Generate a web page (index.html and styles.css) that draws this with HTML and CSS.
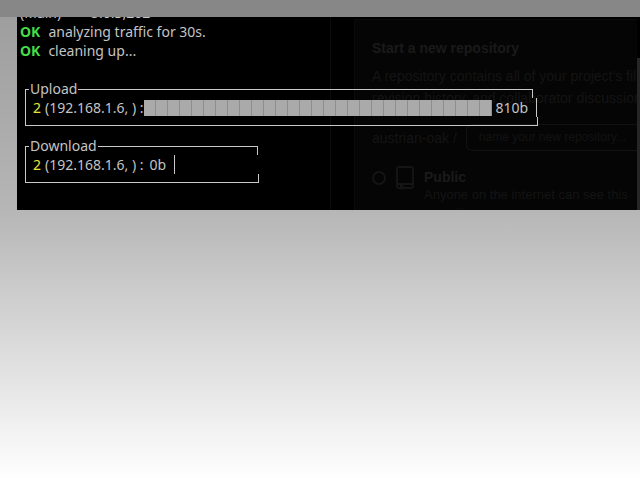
FILE: index.html
```html
<!DOCTYPE html>
<html lang="en">
<head>
  <meta charset="UTF-8" />
  <title>bandwhich - traffic monitor</title>
  <link rel="stylesheet" href="styles.css">
</head>
<body>

<div class="term">
  <!-- page showing through the translucent terminal -->
  <div class="ghost">
    <div class="ghost-rule"></div>
    <div class="ghost-card">
      <div class="ghost-title">Start a new repository</div>
      <div class="ghost-text">A repository contains all of your project's files,<br />revision history, and collaborator discussion.</div>
      <div class="ghost-name">
        <span>austrian-oak /</span>
        <div class="ghost-input">name your new repository...</div>
      </div>
      <div class="ghost-option">
        <span class="ghost-radio"></span>
        <svg class="ghost-book" width="18" height="24" viewBox="0 0 18 24">
          <rect x="1" y="1" width="16" height="21" rx="2" fill="none" stroke="#141414" stroke-width="2" />
          <line x1="1" y1="18" x2="17" y2="18" stroke="#141414" stroke-width="2" />
          <path d="M4 18v6l1.5-1.2 1.5 1.2v-6z" fill="#141414" />
        </svg>
        <div>
          <div class="ghost-label">Public</div>
          <div class="ghost-desc">Anyone on the internet can see this<br />repository.</div>
        </div>
      </div>
    </div>
    <div class="ghost-scroll"></div>
  </div>

  <div class="screen">
    <div class="line">(Main) &middot;&middot;&middot; &middot;&middot; 5.0.3,202</div>
    <div class="line"><b class="ok">OK</b>analyzing traffic for 30s.</div>
    <div class="line"><b class="ok">OK</b>cleaning up...</div>
    <div class="line"></div>

    <div class="panel panel-up">
      <div class="panel-top"><span class="title">Upload</span><span class="rule"></span></div>
      <div class="panel-row"><span class="num">2</span>(192.168.1.6, ) :<span class="bar"></span>810b</div>
      <div class="panel-bottom"></div>
    </div>

    <div class="panel panel-down">
      <div class="panel-top"><span class="title">Download</span><span class="rule"></span></div>
      <div class="panel-row"><span class="num">2</span>(192.168.1.6, ) :<span class="amount">0b</span></div>
      <div class="panel-bottom"></div>
    </div>
  </div>
</div>

</body>
</html>
```

FILE: styles.css
```css
body {
  margin: 0;
  height: 480px;
  overflow: hidden;
  background: linear-gradient(to bottom, #878787 0, #878787 17px, #9e9e9e 17px, #b6b6b6 210px, #ffffff 480px);
  font-family: 'Noto Sans', 'Open Sans', sans-serif;
}

.term {
  position: relative;
  margin: 17px 0 0 17px;
  width: 623px;
  height: 193px;
  background: #000;
  overflow: hidden;
}

/* faint page behind the terminal */
.ghost {
  position: absolute;
  top: 0;
  left: 0;
  right: 0;
  bottom: 0;
  display: flex;
  padding-left: 313px;
  font-family: 'Liberation Sans', Arial, sans-serif;
  font-size: 14px;
  color: #141414;
}

.ghost-rule { width: 1px; background: #0b0b0b; }

.ghost-card {
  flex: 1;
  margin: 2px 0 0 23px;
  padding: 18px 0 0 17px;
  background: #050505;
  border-left: 1px solid #0c0c0c;
  border-top: 1px solid #0c0c0c;
  white-space: nowrap;
  overflow: hidden;
}

.ghost-title {
  font-weight: bold;
  line-height: 20px;
  color: #1a1a1a;
}

.ghost-text {
  margin-top: 7px;
  line-height: 22px;
}

.ghost-name {
  display: flex;
  align-items: center;
  gap: 9px;
  margin-top: 15px;
}

.ghost-input {
  flex: 1;
  height: 25px;
  line-height: 25px;
  padding-left: 12px;
  border: 1px solid #121212;
  border-right: none;
  border-radius: 6px 0 0 6px;
  font-size: 12px;
  color: #131313;
}

.ghost-option {
  display: flex;
  align-items: flex-start;
  margin-top: 17px;
  line-height: 18px;
}

.ghost-radio {
  flex-shrink: 0;
  width: 10px;
  height: 10px;
  margin-top: 3px;
  border: 2px solid #141414;
  border-radius: 50%;
}

.ghost-book {
  flex-shrink: 0;
  margin: -2px 10px 0 10px;
}

.ghost-label { font-weight: bold; color: #1a1a1a; }

.ghost-desc { font-size: 13px; }

.ghost-scroll {
  width: 3px;
  margin-top: 41px;
  background: #262626;
}

/* terminal output */
.screen {
  position: relative;
  margin-top: -14px;
  padding-left: 3px;
  font-size: 14px;
  line-height: 19px;
  color: #c4c4c4;
  white-space: nowrap;
}

.line { height: 19px; }

.ok {
  color: #45dc45;
  margin-right: 8px;
}

.panel { margin-left: 5px; }

.panel-top {
  display: flex;
  height: 19px;
}

.panel-top::before {
  content: "";
  width: 3px;
  margin-top: 10px;
  border-left: 1px solid #c8c8c8;
  border-top: 1px solid #c8c8c8;
}

.title { padding: 0 1px; }

.rule {
  flex: 1;
  margin-top: 10px;
  border-top: 1px solid #c8c8c8;
  border-right: 1px solid #c8c8c8;
}

.panel-row {
  display: inline-flex;
  align-items: center;
  height: 19px;
  padding: 0 8px 0 7px;
  border-left: 1px solid #c8c8c8;
  border-right: 1px solid #c8c8c8;
}

.num {
  color: #e6e63a;
  margin-right: 4px;
}

.bar {
  width: 348px;
  height: 16px;
  margin: 1px 4px 0 0;
  background: repeating-linear-gradient(to right, #aaaaaa 0, #aaaaaa 11px, #8e8e8e 11px, #8e8e8e 12px);
}

.amount { margin-left: 6px; }

.panel-bottom {
  height: 8px;
  margin-bottom: 10px;
  border-left: 1px solid #c8c8c8;
  border-right: 1px solid #c8c8c8;
  border-bottom: 1px solid #c8c8c8;
}

.panel-up .panel-top { width: 508px; }
.panel-up .panel-bottom { width: 511px; }
.panel-down .panel-top { width: 233px; }
.panel-down .panel-bottom { width: 232px; }
```
